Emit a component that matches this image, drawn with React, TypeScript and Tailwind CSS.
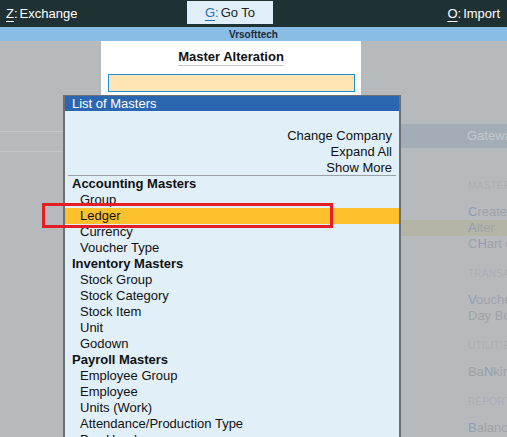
const masters: { label: string; group?: boolean; active?: boolean }[] = [
  { label: "Accounting Masters", group: true },
  { label: "Group" },
  { label: "Ledger", active: true },
  { label: "Currency" },
  { label: "Voucher Type" },
  { label: "Inventory Masters", group: true },
  { label: "Stock Group" },
  { label: "Stock Category" },
  { label: "Stock Item" },
  { label: "Unit" },
  { label: "Godown" },
  { label: "Payroll Masters", group: true },
  { label: "Employee Group" },
  { label: "Employee" },
  { label: "Units (Work)" },
  { label: "Attendance/Production Type" },
  { label: "Pay Heads" },
];

// faded "Gateway of Tally" menu behind the popup
const gateway: { title: string; items: [string, string, string][] }[] = [
  { title: "Masters", items: [["", "C", "reate"], ["", "A", "lter"], ["C", "H", "art of Accounts"]] },
  { title: "Transactions", items: [["", "V", "ouchers"], ["Day Book", "", ""]] },
  { title: "Utilities", items: [["Ba", "N", "king"]] },
  { title: "Reports", items: [["", "B", "alance Sheet"]] },
];

function Key({ k, className }: { k: string; className?: string }) {
  return (
    <span className={className}>
      <span className="underline underline-offset-[3px]">{k}</span>:
    </span>
  );
}

export default function App() {
  return (
    <div className="relative h-[437px] w-[507px] overflow-hidden bg-[#b7babd] font-['Liberation_Sans',Arial,sans-serif] text-[13px]">
      <header className="flex h-[27px] bg-[#1f3133] text-white">
        <div className="flex w-[187px] items-center pl-[6px] leading-[25px]">
          <Key k="Z" />
          <span className="ml-[2px]">Exchange</span>
        </div>
        <div className="mt-[1px] flex h-[23px] w-[86px] items-center justify-center bg-[#dfeef9] text-[#222]">
          <Key k="G" className="text-[#2a6cb4]" />
          <span className="ml-[2px]">Go To</span>
        </div>
        <div className="flex flex-1 items-center justify-end pr-[7px] leading-[25px]">
          <Key k="O" />
          <span className="ml-[2px]">Import</span>
        </div>
      </header>
      <div className="flex h-[14px] items-center justify-center bg-[#89bde6] text-[10px] font-bold text-[#1c2a36]">
        Vrsofttech
      </div>

      <main className="relative flex h-[396px]">
        <div className="flex-1 pt-[90px]">
          <div className="h-[21px] border-y border-[#c3c6c9]" />
        </div>
        <aside className="flex w-[140px] flex-col overflow-hidden pt-[83px] whitespace-nowrap text-[#9ea2a7]">
          <div className="flex h-[24px] items-center bg-[#a3adb7] pl-[100px] text-[#c3c9cf]">
            Gateway of Tally
          </div>
          {gateway.map((s, i) => (
            <section key={s.title} className={i === 0 ? "mt-[30px]" : "mt-[14px]"}>
              <div className="h-[16px] pl-[101px] text-[10px] uppercase leading-[16px] tracking-wide text-[#a8afb6]">
                {s.title}
              </div>
              <div className="mt-[10px]">
                {s.items.map(([a, hot, b]) => (
                  <div
                    key={a + hot + b}
                    className={`h-[16px] pl-[101px] leading-[16px] ${hot === "A" ? "bg-[#b4b5a7]" : ""}`}
                  >
                    {a}
                    <span className="text-[#8e9db1]">{hot}</span>
                    {b}
                  </div>
                ))}
              </div>
            </section>
          ))}
        </aside>

        {/* Master Alteration */}
        <div className="absolute left-[101px] top-0 flex h-[70px] w-[260px] flex-col items-center bg-white pt-[8px]">
          <span className="border-b border-[#c9c9c9] text-[13px] font-bold leading-[16px] text-[#111]">
            Master Alteration
          </span>
          <div className="mt-[8px] h-[18px] w-[247px] border border-[#1e8fd4] bg-[#fde6b3]" />
        </div>

        {/* List of Masters */}
        <div className="absolute left-[63px] top-[54px] flex h-[360px] w-[338px] flex-col border-x-2 border-t border-[#6b7075] bg-[#e1eff9] text-[#111]">
          <div className="flex h-[15px] items-center bg-[#2b67b0] pl-[7px] text-white">List of Masters</div>
          <div className="pt-[17px] pr-[7px] text-right leading-[16px]">
            <div>Change Company</div>
            <div>Expand All</div>
            <div className="leading-[15px]">Show More</div>
          </div>
          <div className="mx-[3px] border-t border-[#9aa0a6]" />
          {masters.map((m) => (
            <div
              key={m.label}
              className={`h-[16px] leading-[16px] ${m.group ? "pl-[7px] font-bold" : "pl-[15px]"} ${m.active ? "bg-[#fdc12e]" : ""}`}
            >
              {m.label}
            </div>
          ))}
        </div>

        {/* annotation */}
        <div className="absolute left-[42px] top-[162px] h-[25px] w-[291px] border-[3px] border-[#e41e26]" />
      </main>
    </div>
  );
}
